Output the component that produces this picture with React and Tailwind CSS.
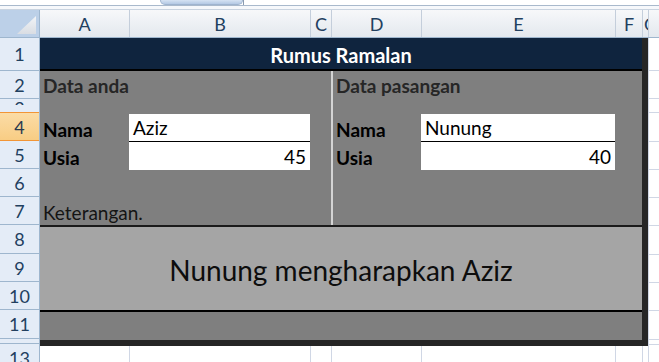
import React from "react";

const rowHeights = [
  { n: "1", h: "h-[33px]" },
  { n: "2", h: "h-[28px]" },
  { n: "3", h: "h-[14px]", clip: true },
  { n: "4", h: "h-[29px]", sel: true },
  { n: "5", h: "h-[28px]" },
  { n: "6", h: "h-[28px]" },
  { n: "7", h: "h-[28px]" },
  { n: "8", h: "h-[29px]" },
  { n: "9", h: "h-[28px]" },
  { n: "10", h: "h-[28px]" },
  { n: "11", h: "h-[29px]" },
  { n: "", h: "h-[5px]" },
];

const rightRows = [
  "h-[33px]", "h-[28px]", "h-[14px]", "h-[29px]", "h-[28px]", "h-[28px]",
  "h-[28px]", "h-[29px]", "h-[28px]", "h-[28px]", "h-[29px]", "h-[5px]",
];

function ColHeader({ w, label, left }) {
  return (
    <div className={`${w} h-full border-r border-[#c4cedb] flex items-center overflow-hidden text-[18px] leading-none text-[#22405f] ${left ? "justify-start pl-px" : "justify-center"}`}>
      {label}
    </div>
  );
}

function InputRow({ label, labelW, boxW, value, right, first }) {
  return (
    <div className={`flex ${first ? "h-[29px] pt-px" : "h-[28px]"}`}>
      <div className={`${labelW} flex items-end pb-[3px] pl-[3px] font-bold text-black text-[19px] leading-none`}>
        {label}
      </div>
      <div
        className={`${boxW} h-[28px] bg-white flex items-end pb-[4px] text-[19px] leading-none text-black ${
          first ? "border-b border-black" : "h-[27px]"
        } ${right ? "justify-end pr-[4px]" : "pl-[4px]"}`}
      >
        {value}
      </div>
    </div>
  );
}

function Half({ width, labelW, boxW, title, name, age, note }) {
  return (
    <div className={`${width} flex flex-col`}>
      <div className="h-[28px] flex items-end pb-[4px] pl-[3px] font-bold text-[19px] leading-none text-[#262626]">
        {title}
      </div>
      <div className="h-[14px]" />
      <InputRow first label="Nama" labelW={labelW} boxW={boxW} value={name} />
      <InputRow label="Usia" labelW={labelW} boxW={boxW} value={age} right />
      <div className="h-[28px]" />
      <div className="h-[27px] flex items-end pb-[3px] pl-[3px] text-[19px] leading-none text-[#141414]">
        {note}
      </div>
    </div>
  );
}

export default function App() {
  return (
    <div className="w-[659px] h-[362px] overflow-hidden bg-white flex flex-col font-['Lato',sans-serif]">
      {/* top strip */}
      <div className="h-[10px] flex flex-col shrink-0">
        <div className="h-[5px] flex">
          <div className="w-[160px]" />
          <div className="w-[83px] h-[5px] rounded-b-[6px] bg-gradient-to-b from-[#d6e3f3] to-[#b4c9e4] border-x border-b border-[#9fb4cf]" />
          <div className="w-px h-[5px] bg-[#8a9bb0]" />
        </div>
        <div className="h-px bg-[#a9b9cc]" />
        <div className="flex-1 bg-[#f6f8fb] border-b border-[#c9d3df]" />
      </div>

      {/* column headers */}
      <div className="h-[28px] flex shrink-0 bg-gradient-to-b from-[#f7f8fa] to-[#e3e8ee] border-b border-[#9eb6ce]">
        <div className="w-[40px] h-full border-r border-[#9eb6ce] bg-[#bcd0e8] flex items-end justify-end p-[3px]">
          <svg width="19" height="18" viewBox="0 0 19 18">
            <defs>
              <linearGradient id="tri" x1="0" y1="0" x2="0" y2="1">
                <stop offset="0" stopColor="#f2f4f7" />
                <stop offset="1" stopColor="#d9dde3" />
              </linearGradient>
            </defs>
            <polygon points="0,18 19,18 19,0" fill="url(#tri)" />
          </svg>
        </div>
        <ColHeader w="w-[90px]" label="A" />
        <ColHeader w="w-[181px]" label="B" />
        <ColHeader w="w-[21px]" label="C" />
        <ColHeader w="w-[90px]" label="D" />
        <ColHeader w="w-[194px]" label="E" />
        <ColHeader w="w-[27px]" label="F" />
        <ColHeader w="w-[6px]" label="G" left />
        <div className="flex-1" />
      </div>

      {/* body */}
      <div className="flex flex-1 min-h-0">
        {/* row headers */}
        <div className="w-[40px] flex flex-col bg-[#e4ecf7] border-r border-[#9eb6ce] shrink-0">
          {rowHeights.map((r, i) => (
            <div
              key={i}
              className={`${r.h} shrink-0 overflow-hidden border-b flex justify-center text-[18px] leading-none ${
                r.sel
                  ? "bg-gradient-to-b from-[#fbdca6] to-[#f8cd84] border-[#f29536] border-t -mt-px text-[#2a3b50] items-center"
                  : "border-[#9eb6ce] text-[#22405f] items-center"
              }`}
            >
              {r.clip ? (
                <div className="h-[6px] overflow-hidden self-start">
                  <div className="leading-[18px]">{r.n}</div>
                </div>
              ) : (
                r.n
              )}
            </div>
          ))}
          <div className="flex-1 overflow-hidden flex justify-center items-start pt-[5px] text-[18px] leading-none text-[#22405f]">
            13
          </div>
        </div>

        {/* sheet area */}
        <div className="flex-1 flex flex-col min-w-0">
          <div className="flex shrink-0">
            {/* framed report */}
            <div className="w-[608px] flex flex-col">
              <div className="flex">
                <div className="w-[602px] flex flex-col">
                  <div className="h-[33px] bg-[#0f243e] border-b-2 border-black flex items-end justify-center pb-[4px] text-white font-bold text-[20px] leading-none">
                    Rumus Ramalan
                  </div>
                  <div className="h-[154px] bg-[#7f7f7f] flex">
                    <Half
                      width="w-[291px]"
                      labelW="w-[89px]"
                      boxW="w-[181px]"
                      title="Data anda"
                      name="Aziz"
                      age="45"
                      note="Keterangan."
                    />
                    <div className="w-[2px] bg-[#d4d4d4]" />
                    <Half
                      width="w-[309px]"
                      labelW="w-[88px]"
                      boxW="w-[194px]"
                      title="Data pasangan"
                      name="Nunung"
                      age="40"
                      note=""
                    />
                  </div>
                  <div className="h-[2px] bg-[#1a1a1a]" />
                  <div className="h-[83px] bg-[#a5a5a5] flex items-center justify-center pt-[3px] text-[28px] leading-none text-[#0d0d0d]">
                    Nunung mengharapkan Aziz
                  </div>
                  <div className="h-[2px] bg-black" />
                  <div className="h-[28px] bg-[#7f7f7f]" />
                </div>
                <div className="w-[6px] bg-[#262626]" />
              </div>
              <div className="h-[6px] bg-[#262626]" />
            </div>
            {/* empty cells to the right */}
            <div className="flex-1 flex flex-col border-l border-[#d0d7e5]">
              {rightRows.map((h, i) => (
                <div key={i} className={`${h} shrink-0 border-b border-[#d0d7e5]`} />
              ))}
            </div>
          </div>
          {/* row 13 cells */}
          <div className="flex-1 flex">
            <div className="w-[90px] border-r border-[#d0d7e5]" />
            <div className="w-[181px] border-r border-[#d0d7e5]" />
            <div className="w-[21px] border-r border-[#d0d7e5]" />
            <div className="w-[90px] border-r border-[#d0d7e5]" />
            <div className="w-[194px] border-r border-[#d0d7e5]" />
            <div className="w-[27px] border-r border-[#d0d7e5]" />
            <div className="w-[6px] border-r border-[#d0d7e5]" />
            <div className="flex-1" />
          </div>
        </div>
      </div>
    </div>
  );
}
